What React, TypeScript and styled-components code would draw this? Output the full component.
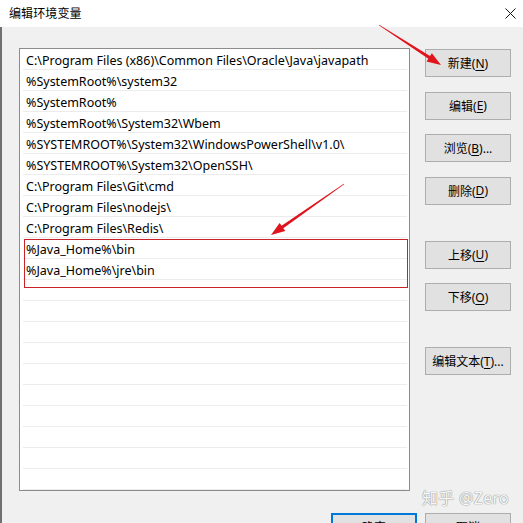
import React from "react";
import styled, { createGlobalStyle } from "styled-components";

const Global = createGlobalStyle`
  html, body { margin: 0; padding: 0; background: #f0f0f0; overflow: hidden; }
  * { box-sizing: border-box; }
`;

const FONT = `"Noto Sans", "Noto Sans CJK SC", sans-serif`;

const Root = styled.div`
  position: relative;
  width: 523px;
  height: 523px;
  overflow: hidden;
  background: #f0f0f0;
  font-family: ${FONT};
  font-size: 12px;
  color: #000;
`;

const TitleBar = styled.div`
  height: 27px;
  background: #fff;
  display: flex;
  align-items: center;
  justify-content: space-between;
  padding: 0 7px 0 9px;
`;

const Title = styled.div`
  font-size: 12px;
  line-height: 25px;
  letter-spacing: 0.1px;
`;

const Body = styled.div`
  border-left: 2px solid #707070;
  padding: 21px 12px 0 17px;
  height: 496px;
`;

const Main = styled.div`
  display: flex;
  gap: 15px;
`;

const ListBox = styled.div`
  width: 392px;
  height: 443px;
  background: #fff;
  border: 1px solid #8c8c8c;
  padding: 0 2px 0 3px;
  overflow: hidden;
`;

const Row = styled.div`
  height: 21px;
  line-height: 20px;
  padding: 2px 0 0 3px;
  font-size: 12.5px;
  border-bottom: 1px solid #ececec;
  white-space: nowrap;
`;

const ButtonColumn = styled.div`
  display: flex;
  flex-direction: column;
  gap: 36px;
  padding-top: 1px;
`;

const Group = styled.div`
  display: flex;
  flex-direction: column;
  gap: 14.5px;
`;

const Button = styled.div<{ $primary?: boolean }>`
  width: 86px;
  height: 28px;
  background: #e1e1e1;
  border: ${(p) => (p.$primary ? "2px solid #0078d7" : "1px solid #adadad")};
  display: flex;
  align-items: center;
  justify-content: center;
  font-size: 12px;
  white-space: nowrap;
`;

const Key = styled.span`
  text-decoration: underline;
  text-underline-offset: 2px;
`;

const Footer = styled.div`
  display: flex;
  justify-content: flex-end;
  gap: 8px;
  margin-top: 22px;
`;

const Watermark = styled.div`
  position: absolute;
  left: 422px;
  top: 485px;
  font-size: 16px;
  color: #f8f8f8;
  text-shadow: 0 0 1px #8a8a8a, 0 0 1px #8a8a8a;
  letter-spacing: 0.3px;
  white-space: nowrap;
`;

const Highlight = styled.div`
  position: absolute;
  left: 24px;
  top: 239px;
  width: 384px;
  height: 49px;
  border: 1.5px solid #c8232b;
`;

const Overlay = styled.svg`
  position: absolute;
  left: 0;
  top: 0;
  pointer-events: none;
`;

function arrowPoints(tx: number, ty: number, hx: number, hy: number, headLen: number, headHalf: number, shaft: number) {
  const dx = hx - tx;
  const dy = hy - ty;
  const len = Math.hypot(dx, dy);
  const ux = dx / len;
  const uy = dy / len;
  const nx = -uy;
  const ny = ux;
  const bx = hx - ux * headLen;
  const by = hy - uy * headLen;
  const pts: [number, number][] = [
    [tx + nx * 0.3, ty + ny * 0.3],
    [bx + nx * shaft, by + ny * shaft],
    [bx + nx * headHalf, by + ny * headHalf],
    [hx, hy],
    [bx - nx * headHalf, by - ny * headHalf],
    [bx - nx * shaft, by - ny * shaft],
    [tx - nx * 0.3, ty - ny * 0.3],
  ];
  return pts.map((p) => p.map((v) => v.toFixed(1)).join(",")).join(" ");
}

const rows = [
  "C:\\Program Files (x86)\\Common Files\\Oracle\\Java\\javapath",
  "%SystemRoot%\\system32",
  "%SystemRoot%",
  "%SystemRoot%\\System32\\Wbem",
  "%SYSTEMROOT%\\System32\\WindowsPowerShell\\v1.0\\",
  "%SYSTEMROOT%\\System32\\OpenSSH\\",
  "C:\\Program Files\\Git\\cmd",
  "C:\\Program Files\\nodejs\\",
  "C:\\Program Files\\Redis\\",
  "%Java_Home%\\bin",
  "%Java_Home%\\jre\\bin",
];

const allRows = [...rows, ...Array(21 - rows.length).fill("")];

export default function App() {
  return (
    <Root>
      <Global />
      <TitleBar>
        <Title>编辑环境变量</Title>
        <svg width="11" height="11" viewBox="0 0 11 11">
          <path d="M0.5 0.5 L10.5 10.5 M10.5 0.5 L0.5 10.5" stroke="#111" strokeWidth="1" />
        </svg>
      </TitleBar>
      <Body>
        <Main>
          <ListBox>
            {allRows.map((r, i) => (
              <Row key={i}>{r}</Row>
            ))}
          </ListBox>
          <ButtonColumn>
            <Group>
              <Button>新建(<Key>N</Key>)</Button>
              <Button>编辑(<Key>E</Key>)</Button>
              <Button>浏览(<Key>B</Key>)...</Button>
              <Button>删除(<Key>D</Key>)</Button>
            </Group>
            <Group>
              <Button>上移(<Key>U</Key>)</Button>
              <Button>下移(<Key>O</Key>)</Button>
            </Group>
            <Group>
              <Button>编辑文本(<Key>T</Key>)...</Button>
            </Group>
          </ButtonColumn>
        </Main>
        <Footer>
          <Button $primary>确定</Button>
          <Button>取消</Button>
        </Footer>
      </Body>
      <Watermark>知乎 @Zero</Watermark>
      <Highlight />
      <Overlay width="523" height="523" viewBox="0 0 523 523">
        <polygon points={arrowPoints(379, 25, 441, 65, 14, 5, 1.5)} fill="#e0141c" />
        <polygon points={arrowPoints(344, 184, 271, 235, 14, 5, 1.5)} fill="#e0141c" />
      </Overlay>
    </Root>
  );
}
